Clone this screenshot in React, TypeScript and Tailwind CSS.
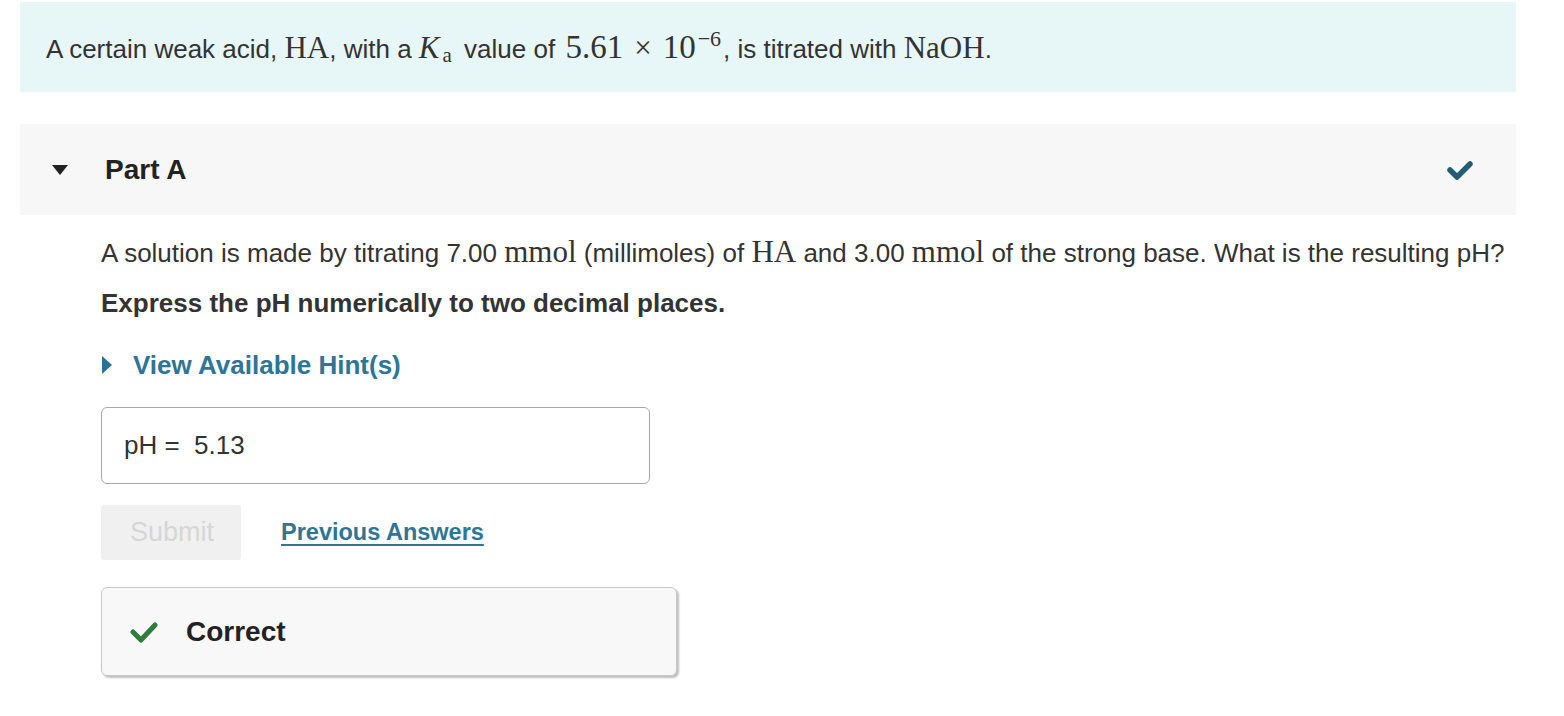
import React from 'react';

const sans = { fontFamily: '"Liberation Sans", Arial, sans-serif' };

function M({ children }: { children: React.ReactNode }) {
  return <span className="font-['Liberation_Serif',serif] text-[31px] leading-none">{children}</span>;
}

export default function App() {
  return (
    <div className="w-[1564px] h-[716px] bg-white text-[#333] overflow-hidden" style={sans}>
      <div className="pt-[2px] pl-[20px]">
        <div className="w-[1496px] h-[90px] bg-[#e7f6f6] flex items-center pl-[26px] pt-[4px] text-[26px]">
          <span className="whitespace-nowrap">
            A certain weak acid, <M>HA</M>, with a{' '}
            <M>
              <i className="mr-[1px]">K</i>
              <span className="text-[21px] relative top-[4px] ml-[2px] mr-[5px]">a</span>
            </M>{' '}
            value of{' '}
            <M>
              <span className="ml-[3px] text-[33px]">5.61</span>
              <span className="mx-[11px]">×</span>
              <span className="text-[33px]">10</span>
              <span className="text-[22px] relative top-[-12px] ml-[2px] mr-[2px]">−6</span>
            </M>
            , is titrated with <M>NaOH</M>.
          </span>
        </div>

        <div className="mt-[32px] w-[1496px] h-[91px] bg-[#f7f7f7] flex items-center">
          <div className="w-[85px] pl-[32px] flex">
            <svg width="16" height="12" viewBox="0 0 16 12">
              <path d="M0 1 L16 1 L8 11 Z" fill="#222" />
            </svg>
          </div>
          <span className="font-bold text-[28px] text-[#222]">Part A</span>
          <div className="ml-auto mr-[42px] flex">
            <svg width="28" height="22" viewBox="0 0 28 22">
              <path d="M4 11 L11 18 L24 5" stroke="#235d74" strokeWidth="5.5" fill="none" strokeLinecap="round" strokeLinejoin="round" />
            </svg>
          </div>
        </div>

        <div className="pl-[81px] pt-[20px]">
          <p className="text-[26px] leading-[36px] whitespace-nowrap">
            A solution is made by titrating 7.00 <M>mmol</M> (millimoles) of <M>HA</M> and 3.00 <M>mmol</M> of the strong base. What is the resulting pH?
          </p>
          <p className="mt-[14px] text-[26px] font-bold leading-[36px]">Express the pH numerically to two decimal places.</p>

          <div className="mt-[26px] flex items-center h-[36px]">
            <svg width="12" height="18" viewBox="0 0 12 18">
              <path d="M1 0 L11 9 L1 18 Z" fill="#2b7194" />
            </svg>
            <span className="ml-[20px] font-bold text-[26px] text-[#2e7596]">View Available Hint(s)</span>
          </div>

          <div className="mt-[24px] w-[549px] h-[77px] border-[1.5px] border-[#a8a8a8] rounded-[6px] flex items-center pl-[22px] text-[26px] text-[#333]">
            pH =&nbsp; 5.13
          </div>

          <div className="mt-[21px] flex items-center">
            <div className="w-[140px] h-[55px] bg-[#f0f0f0] rounded-[3px] flex items-center justify-center pl-[2px] text-[27px] text-[#d6d6d6]">
              Submit
            </div>
            <span className="ml-[40px] font-bold text-[23.5px] text-[#2e7596] underline underline-offset-[4px] decoration-[2px]">
              Previous Answers
            </span>
          </div>

          <div className="mt-[27px] w-[576px] h-[89px] bg-[#f8f8f8] border border-[#c8c8c8] rounded-[6px] shadow-[2px_2px_2px_rgba(0,0,0,0.25)] flex items-center pl-[28px]">
            <svg width="28" height="22" viewBox="0 0 28 22">
              <path d="M3 11 L11 19 L25 4" stroke="#2e7d3c" strokeWidth="5" fill="none" strokeLinecap="round" strokeLinejoin="round" />
            </svg>
            <span className="ml-[28px] font-bold text-[28px] text-[#222]">Correct</span>
          </div>
        </div>
      </div>
    </div>
  );
}
